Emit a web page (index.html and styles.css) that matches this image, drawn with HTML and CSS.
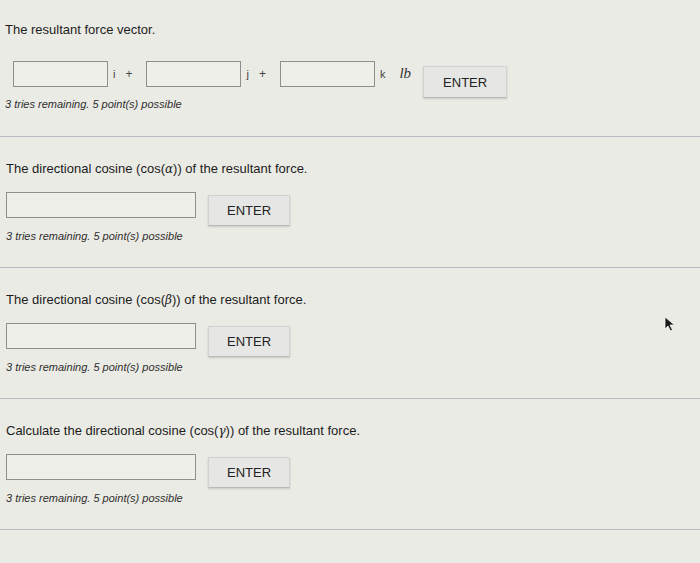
FILE: index.html
```html
<!DOCTYPE html>
<html>
<head>
<meta charset="utf-8">
<link rel="stylesheet" href="styles.css">
</head>
<body>
<div class="page">
  <section class="q q-first">
    <p class="title">The resultant force vector.</p>
    <div class="row vec-row">
      <span class="box small"></span><span class="unit">i</span><span class="plus">+</span>
      <span class="box small"></span><span class="unit">j</span><span class="plus">+</span>
      <span class="box small"></span><span class="unit">k</span><span class="lb">lb</span>
      <button class="enter enter-first">ENTER</button>
    </div>
    <p class="tries">3 tries remaining. 5 point(s) possible</p>
  </section>
  <section class="q">
    <p class="title">The directional cosine (cos(<i>α</i>)) of the resultant force.</p>
    <div class="row">
      <span class="box wide"></span>
      <button class="enter">ENTER</button>
    </div>
    <p class="tries">3 tries remaining. 5 point(s) possible</p>
  </section>
  <section class="q">
    <p class="title">The directional cosine (cos(<i>β</i>)) of the resultant force.</p>
    <div class="row">
      <span class="box wide"></span>
      <button class="enter">ENTER</button>
    </div>
    <p class="tries">3 tries remaining. 5 point(s) possible</p>
  </section>
  <section class="q">
    <p class="title">Calculate the directional cosine (cos(<i>γ</i>)) of the resultant force.</p>
    <div class="row">
      <span class="box wide"></span>
      <button class="enter">ENTER</button>
    </div>
    <p class="tries">3 tries remaining. 5 point(s) possible</p>
  </section>
  <svg class="cursor" width="12" height="16" viewBox="0 0 12 16"><path d="M1 1 L1 13 L4 10 L6.5 15 L8.5 14 L6 9 L10.5 9 Z" fill="#1a1a1a" stroke="#f4f4f4" stroke-width="0.8"/></svg>
</div>
</body>
</html>
```
FILE: styles.css
```css
html, body {
  margin: 0;
  padding: 0;
}
body {
  background: #ebebe5;
  font-family: "Liberation Sans", Arial, sans-serif;
  color: #1c1c1c;
}
.page {
  position: relative;
  width: 700px;
  height: 563px;
  overflow: hidden;
}
.q {
  padding: 24px 0 24px 6px;
  border-bottom: 1px solid #b9b9c2;
}
.q-first {
  padding-top: 22px;
  padding-bottom: 25px;
  padding-left: 5px;
}
.title {
  margin: 0;
  font-size: 13px;
  line-height: 16px;
}
.title i {
  font-family: "DejaVu Serif", "Liberation Serif", serif;
  font-size: 12px;
}
.row {
  display: flex;
  align-items: flex-start;
  margin-top: 15px;
}
.vec-row {
  margin-top: 22px;
  padding-left: 8px;
}
.box {
  display: block;
  height: 24px;
  border: 1px solid #8f8f8f;
  background: #efefea;
}
.small {
  width: 93px;
  margin-top: 1px;
}
.wide {
  width: 188px;
}
.unit {
  font-size: 11px;
  color: #444;
  margin: 8px 0 0 5px;
}
.plus {
  font-size: 12px;
  color: #444;
  margin: 7px 14px 0 10px;
}
.lb {
  font-family: "Liberation Serif", "Times New Roman", serif;
  font-style: italic;
  font-size: 15px;
  color: #333;
  margin: 5px 0 0 14px;
}
.enter {
  width: 82px;
  height: 31px;
  margin: 3px 0 0 12px;
  padding: 0;
  background: #e6e6e4;
  border: 1px solid #d2d2d2;
  border-bottom-color: #b8b8b8;
  box-shadow: 0 1px 2px rgba(0, 0, 0, 0.15);
  font-family: "Liberation Sans", Arial, sans-serif;
  font-size: 13px;
  color: #222;
}
.enter-first {
  width: 84px;
  height: 32px;
  margin: 6px 0 0 12px;
}
.tries {
  margin: 4px 0 0;
  font-size: 11px;
  line-height: 13px;
  font-style: italic;
  color: #2e2e2e;
}
.vec-row + .tries {
  margin-top: 0;
}
.cursor {
  position: absolute;
  left: 664px;
  top: 316px;
}
```
